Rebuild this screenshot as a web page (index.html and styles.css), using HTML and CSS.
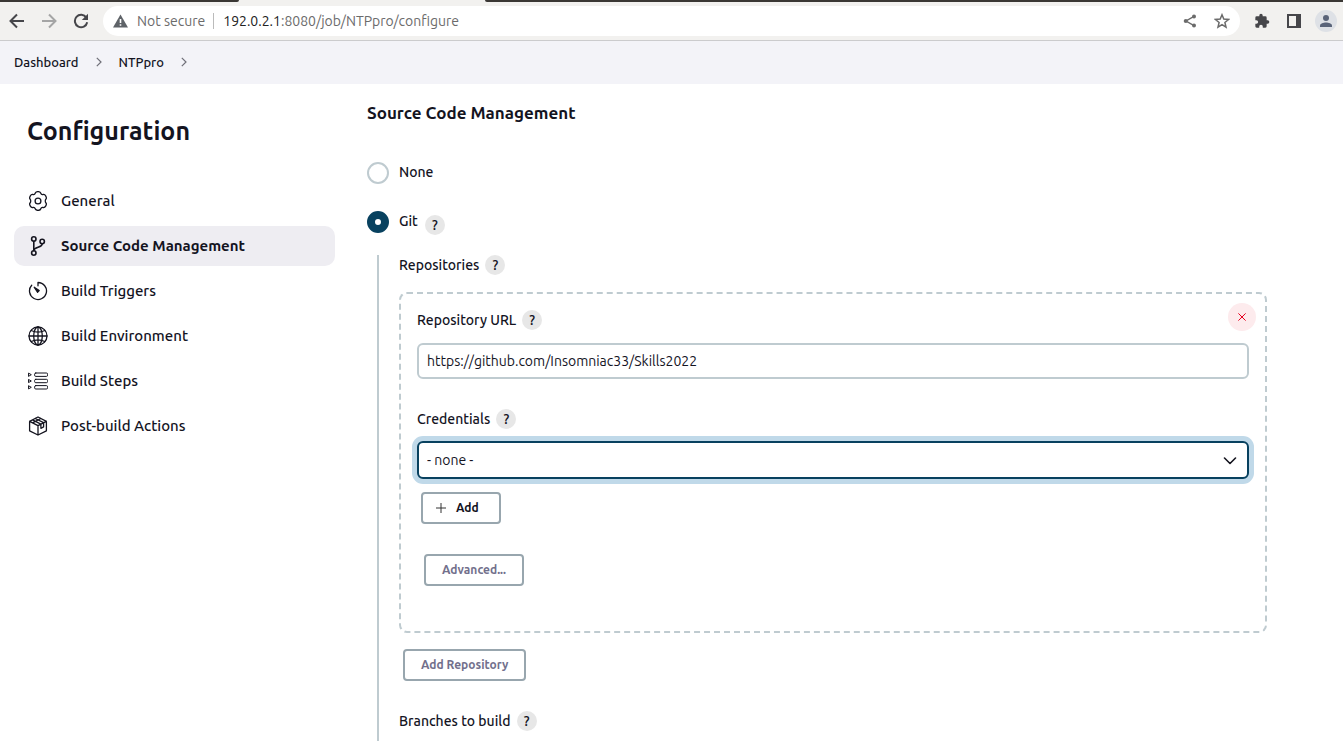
FILE: index.html
```
<!DOCTYPE html>
<html lang="en">
<head>
<meta charset="utf-8">
<title>NTPpro Config [Jenkins]</title>
<link rel="stylesheet" href="styles.css">
</head>
<body>
<div class="tabstrip"><span class="tab-left"></span><span class="tab-gap"></span><span class="tab-right"></span></div>
<header class="toolbar">
  <button class="tool" aria-label="Back"><svg width="16" height="16" viewBox="0 0 16 16"><path d="M15 8H2.500M8 1.500 1.500 8 8 14.500" fill="none" stroke="#46464a" stroke-width="2"/></svg></button>
  <button class="tool" aria-label="Forward"><svg width="16" height="16" viewBox="0 0 16 16"><path d="M1 8h12.500M8 1.500 14.500 8 8 14.500" fill="none" stroke="#a5a5a5" stroke-width="2"/></svg></button>
  <button class="tool" aria-label="Reload"><svg width="16" height="16" viewBox="0 0 16 16"><path d="M13.300 4.600A6.200 6.200 0 1 0 14.200 9.200" fill="none" stroke="#46464a" stroke-width="2"/><path d="M15 .8v6.200H8.800z" fill="#46464a"/></svg></button>
  <div class="omnibox">
    <svg width="15" height="14" viewBox="0 0 15 14"><path d="M7.500.5 15 13.500H0z" fill="#5f6368"/><path d="M7.500 5v4M7.500 10.200v1.600" stroke="#fff" stroke-width="1.600"/></svg>
    <span class="insecure">Not secure</span>
    <span class="url"><span class="host">192.0.2.1</span>:8080/job/NTPpro/configure</span>
    <button class="tool share" aria-label="Share"><svg width="14" height="14" viewBox="0 0 14 14"><path d="M11 2.300 3 7l8 4.700" fill="none" stroke="#6b6b6b" stroke-width="1.400"/><g fill="#6b6b6b"><circle cx="11" cy="2.500" r="2"/><circle cx="2.800" cy="7" r="2.100"/><circle cx="11" cy="11.500" r="2"/></g></svg></button>
    <button class="tool" aria-label="Bookmark"><svg width="16" height="16" viewBox="0 0 16 16"><path d="m8 1.800 1.800 4.300 4.700.4-3.600 3 1.100 4.700L8 11.700l-4 2.500 1.100-4.700-3.600-3 4.700-.4z" fill="none" stroke="#6b6b6b" stroke-width="1.500"/></svg></button>
  </div>
  <button class="tool ext" aria-label="Extensions"><svg width="16" height="16" viewBox="0 0 24 24"><path d="M20.500 11H19V7a2 2 0 0 0-2-2h-4V3.500a2.500 2.500 0 0 0-5 0V5H4a2 2 0 0 0-2 2v3.800h1.500a2.700 2.700 0 0 1 0 5.400H2V20a2 2 0 0 0 2 2h3.800v-1.500a2.700 2.700 0 0 1 5.400 0V22H17a2 2 0 0 0 2-2v-4h1.500a2.500 2.500 0 0 0 0-5z" fill="#46464a"/></svg></button>
  <button class="tool ext" aria-label="Side panel"><svg width="14" height="14" viewBox="0 0 14 14"><path d="M0 0h14v14H0zM2 2v10h7V2z" fill="#46464a" fill-rule="evenodd"/></svg></button>
  <button class="tool profile" aria-label="Profile"><svg width="22" height="22" viewBox="0 0 22 22"><circle cx="11" cy="11" r="11" fill="#dee1e6"/><circle cx="11" cy="8" r="3" fill="#5a6479"/><path d="M5 17v-1.500C5 13.400 8.500 12.500 11 12.500s6 .9 6 3V17z" fill="#5a6479"/></svg></button>
</header>

<nav class="breadcrumbs" aria-label="Breadcrumb">
  <a href="#">Dashboard</a>
  <svg class="sep" width="6" height="10" viewBox="0 0 6 10"><path d="m.8.8 4.200 4.200L.8 9.200"/></svg>
  <a href="#">NTPpro</a>
  <svg class="sep" width="6" height="10" viewBox="0 0 6 10"><path d="m.8.8 4.200 4.200L.8 9.200"/></svg>
</nav>

<div class="page">
  <aside class="sidebar">
    <h1>Configuration</h1>
    <nav class="tasks" aria-label="Sections">
      <a href="#"><svg class="icon" viewBox="0 0 20 20"><path d="M7.200 2.200C7.600.9 8.700.6 10 .6s2.400.3 2.800 1.600c.3 1 1.200 1.500 2.200 1.300 1.300-.3 2.200.5 2.800 1.600s1 2.200 0 3.200c-.7.700-.7 2.700 0 3.400 1 1 .6 2.100 0 3.200s-1.500 1.900-2.800 1.600c-1-.2-1.900.3-2.200 1.300-.4 1.300-1.500 1.600-2.800 1.600s-2.400-.3-2.800-1.600c-.3-1-1.200-1.500-2.200-1.300-1.300.3-2.200-.5-2.800-1.600s-1-2.200 0-3.200c.7-.7.7-2.700 0-3.400-1-1-.6-2.100 0-3.200S3.700 3.200 5 3.500c1 .2 1.900-.3 2.200-1.300z"/><circle cx="10" cy="10" r="2.900"/></svg>General</a>
      <a href="#" class="active" aria-current="true"><svg class="icon bold" viewBox="0 0 20 20"><circle cx="5.800" cy="3" r="2.200"/><circle cx="5.800" cy="17" r="2.200"/><circle cx="14.200" cy="5.500" r="2.200"/><path d="M5.800 5.200v9.600M14.200 7.700c0 4.300-8.400 2.600-8.400 7.100"/></svg>Source Code Management</a>
      <a href="#"><svg class="icon" viewBox="0 0 20 20"><path d="M10 4.800V1.500a8.500 8.500 0 1 1-6.300 2.800"/><path d="m6.200 6.200 5 3.300-1.700 1.700z" fill="currentColor"/></svg>Build Triggers</a>
      <a href="#"><svg class="icon" viewBox="0 0 20 20"><circle cx="10" cy="10" r="9"/><ellipse cx="10" cy="10" rx="4.300" ry="9"/><path d="M10 1v18M1 10h18M3.200 4.500c4 2 9.600 2 13.600 0M3.200 15.500c4-2 9.600-2 13.600 0"/></svg>Build Environment</a>
      <a href="#"><svg class="icon thin" viewBox="0 0 20 20"><rect x="6.600" y="2" width="13" height="3.400" rx="1.200"/><rect x="6.600" y="8.300" width="13" height="3.400" rx="1.200"/><rect x="6.600" y="14.600" width="13" height="3.400" rx="1.200"/><path d="M.8 2.300 3.300 3.700.8 5.200zM.8 8.600 3.300 10 .8 11.400zM.8 14.900l2.500 1.400-2.500 1.400z"/></svg>Build Steps</a>
      <a href="#"><svg class="icon" viewBox="0 0 20 20"><path d="m10 1 8.400 4.300v9.500L10 19l-8.400-4.200V5.300zM1.600 5.300 10 9.600l8.400-4.300M10 9.600V19M4.500 3.900l8.400 4.200v4.200l2.700-1.400V6.700L7.200 2.500M4.600 6.800l8.200-4.300"/></svg>Post-build Actions</a>
    </nav>
  </aside>

  <main class="content">
    <h2>Source Code Management</h2>
    <div class="choice"><input type="radio" name="scm" id="scm-none"><label for="scm-none">None</label></div>
    <div class="choice"><input type="radio" name="scm" id="scm-git" checked><label for="scm-git">Git</label><button class="help choice-help" aria-label="Help for Git">?</button></div>

    <section class="nested">
      <div class="field-label"><span>Repositories</span><button class="help" aria-label="Help for Repositories">?</button></div>
      <div class="repo">
        <button class="remove" aria-label="Delete repository"><svg width="8" height="8" viewBox="0 0 8 8"><path d="m.4.4 7.200 7.200M7.600.4.4 7.600" stroke="#e6001f" stroke-width="1"/></svg></button>
        <div class="field-label"><label for="repo-url">Repository URL</label><button class="help" aria-label="Help for Repository URL">?</button></div>
        <input class="text-input" type="text" id="repo-url" value="https://github.com/Insomniac33/Skills2022">
        <div class="field-label"><label for="credentials">Credentials</label><button class="help" aria-label="Help for Credentials">?</button></div>
        <div class="select-wrap">
          <select id="credentials"><option>- none -</option></select>
          <svg class="chevron" width="14" height="8" viewBox="0 0 14 8"><path d="m1.500 1 5.500 5.500L12.500 1" fill="none" stroke="#14141f" stroke-width="1.600" stroke-linecap="round" stroke-linejoin="round"/></svg>
        </div>
        <button class="btn add"><svg width="10" height="10" viewBox="0 0 10 10"><path d="M5 0v10M0 5h10" stroke="#333" stroke-width="1"/></svg>Add</button>
        <button class="btn muted advanced">Advanced...</button>
      </div>
      <button class="btn muted add-repo">Add Repository</button>
      <div class="field-label"><span>Branches to build</span><button class="help" aria-label="Help for Branches to build">?</button></div>
    </section>
  </main>
</div>
</body>
</html>
```

FILE: styles.css
```
:root {
  --text: #14141f;
  --line: #bfcbd0;
  --accent: #08415f;
  --chrome: #f2f1ef;
  --chrome-dark: #3a3734;
}
* { box-sizing: border-box; }
body {
  margin: 0;
  min-height: 100vh;
  display: flex;
  flex-direction: column;
  background: #fff;
  color: var(--text);
  font: 500 14px/20px Ubuntu, "Noto Sans", sans-serif;
}
a { color: inherit; text-decoration: none; }
button, input, select { font: inherit; color: inherit; margin: 0; }
button { padding: 0; border: 0; background: none; cursor: pointer; }
svg { display: block; flex: none; }

.tabstrip { display: flex; height: 2px; background: var(--chrome); }
.tab-left { width: 239px; background: var(--chrome-dark); border-bottom-right-radius: 2px; }
.tab-gap { width: 246px; }
.tab-right { flex: 1; background: var(--chrome-dark); border-bottom-left-radius: 2px; }

.toolbar {
  display: flex;
  align-items: center;
  height: 39px;
  padding: 0 6px 0 9px;
  background: var(--chrome);
  border-bottom: 1px solid #cbcbcd;
}
.toolbar > .tool { margin-right: 16px; }
.omnibox {
  flex: 1;
  display: flex;
  align-items: center;
  height: 30px;
  margin-left: -2px;
  margin-right: 14px;
  padding: 0 10px;
  border-radius: 15px;
  background: #fff;
  color: #6b6b6b;
  font-weight: 400;
}
.insecure { margin-left: 9px; padding-right: 8px; line-height: 16px; border-right: 1px solid #bbb; }
.url { flex: 1; margin-left: 9px; }
.host { color: #222; }
.share { margin-right: 17px; }
.toolbar > .ext { margin-right: 17px; }
.toolbar > .profile { margin: 0 0 0 -3px; }

.breadcrumbs {
  display: flex;
  align-items: center;
  gap: 17px;
  height: 43px;
  padding: 0 14px 2px;
  background: #f3f3f8;
  font-size: 13px;
}
.sep { fill: none; stroke: #6f6f78; stroke-width: 1.2px; }

.page { flex: 1; display: flex; gap: 32px; padding: 0 76px 0 14px; }
.sidebar { flex: none; width: 321px; }
h1 { margin: 31px 0 34px 13px; font-size: 25px; line-height: 32px; font-weight: 700; }
.tasks { display: flex; flex-direction: column; gap: 5px; }
.tasks a {
  display: flex;
  align-items: center;
  gap: 13px;
  height: 40px;
  padding: 0 14px;
  border-radius: 10px;
  font-size: 15px;
}
.tasks .active { background: #eeedf2; font-weight: 700; }
.icon { width: 20px; height: 20px; fill: none; stroke: currentColor; stroke-width: 1.3px; stroke-linejoin: round; stroke-linecap: round; }
.icon.bold { stroke-width: 1.6px; }
.icon.thin { stroke-width: 1px; }

.content { flex: 1; min-width: 0; display: flex; flex-direction: column; }
h2 { margin: 17px 0 37px; font-size: 17px; line-height: 24px; font-weight: 700; }
.choice { display: flex; align-items: center; gap: 10px; height: 22px; margin-bottom: 27px; }
.choice + .choice { margin-bottom: 22px; }
.choice label { padding-bottom: 2px; }
.choice input {
  appearance: none;
  width: 22px;
  height: 22px;
  border: 2px solid var(--line);
  border-radius: 50%;
  background: #fff;
}
.choice input:checked { border: 8px solid var(--accent); }
.help {
  width: 20px;
  height: 20px;
  border-radius: 50%;
  background: #e7e7e7;
}
.choice-help { align-self: flex-end; margin: 0 0 -2px -3px; }

.nested {
  flex: 1;
  margin-left: 10px;
  padding: 0 0 10px 20px;
  border-left: 2px solid var(--line);
}
.field-label { display: flex; gap: 6px; height: 20px; }
.repo {
  position: relative;
  margin: 17px 0 16px;
  padding: 16px 16px 45px;
  border: 2px dashed var(--line);
  border-radius: 8px;
}
.remove {
  position: absolute;
  top: 9px;
  right: 9px;
  display: grid;
  place-items: center;
  width: 28px;
  height: 28px;
  border-radius: 50%;
  background: #fdebed;
}
.text-input, .select-wrap select {
  display: block;
  width: 100%;
  border: 2px solid var(--line);
  border-radius: 6px;
  padding: 0 8px;
  background: #fff;
  font-weight: 400;
}
.text-input { height: 36px; margin: 13px 0 30px; }
.select-wrap { position: relative; margin: 12px 0 13px; }
.select-wrap select {
  appearance: none;
  height: 38px;
  border-color: var(--accent);
  box-shadow: 0 0 0 5px #c0d9e9;
}
.chevron { position: absolute; right: 12px; top: 16px; pointer-events: none; }
.btn {
  display: flex;
  align-items: center;
  height: 32px;
  padding: 0 16px;
  border: 2px solid #98a6ae;
  border-radius: 4px;
  background: #fff;
  font-size: 12px;
  font-weight: 700;
}
.muted { color: #72708c; }
.add { gap: 10px; margin-left: 4px; padding: 0 20px 0 13px; }
.advanced { margin: 30px 0 0 7px; }
.add-repo { margin: 0 0 30px 4px; }
```
